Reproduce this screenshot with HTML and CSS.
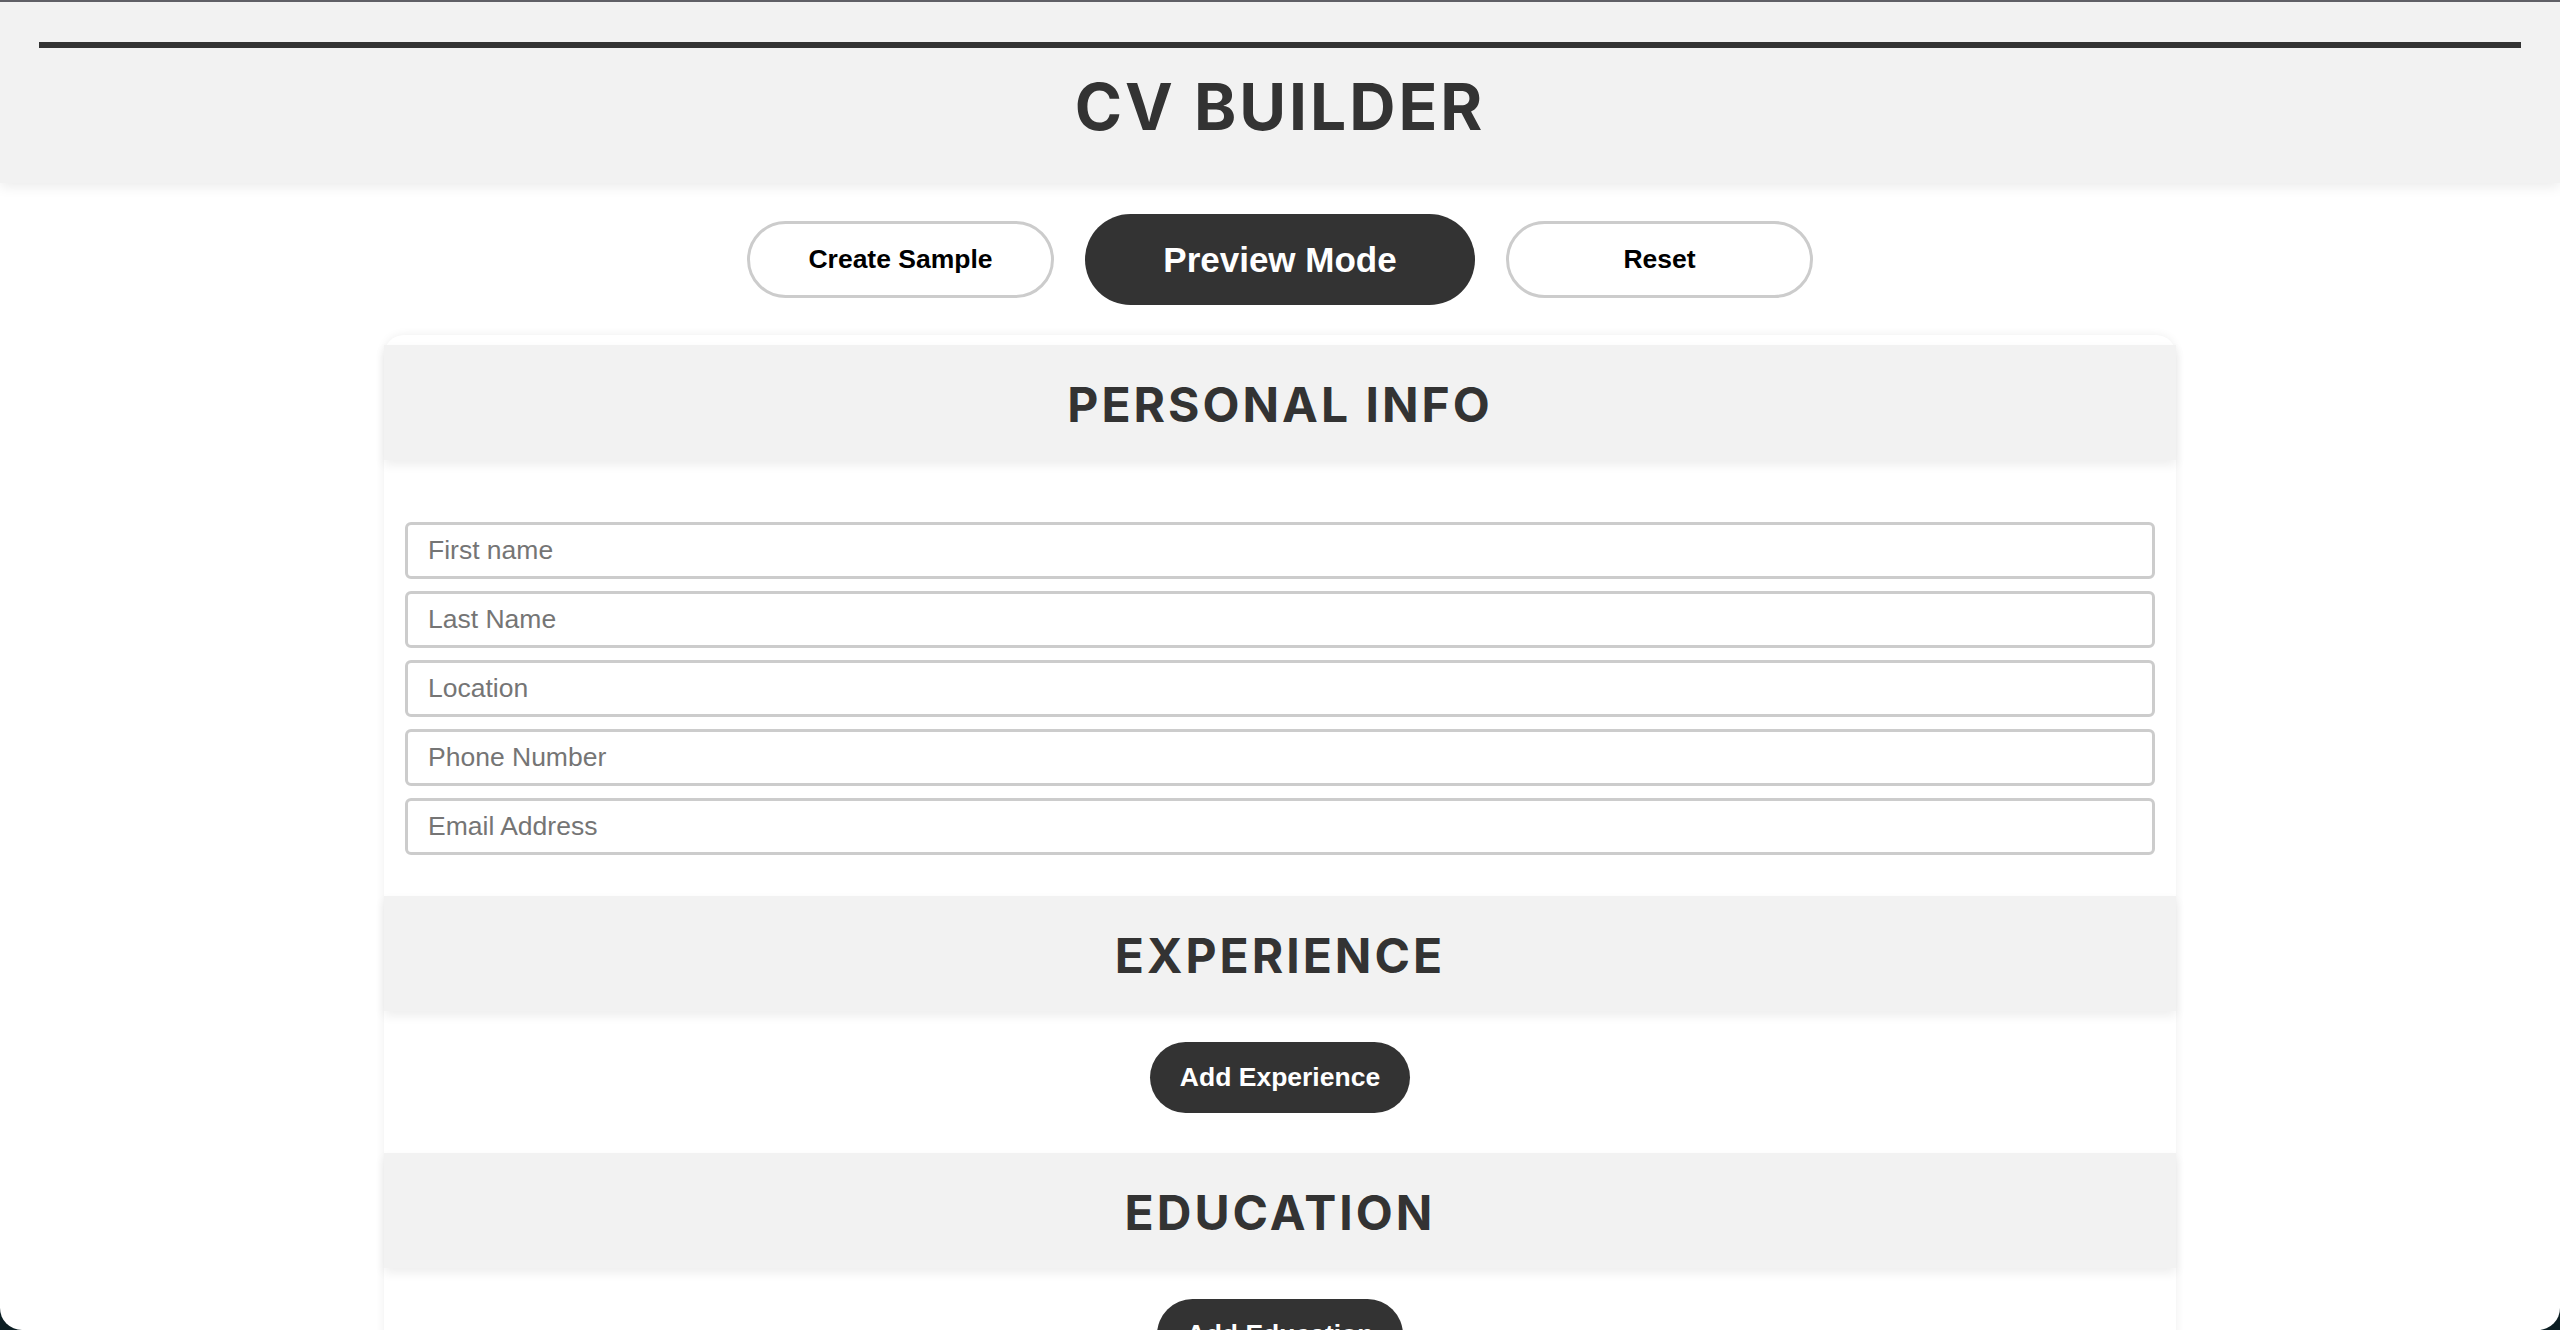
FILE: index.html
```html
<!DOCTYPE html>
<html lang="en">
<head>
<meta charset="utf-8">
<title>CV Builder</title>
<link rel="stylesheet" href="styles.css">
</head>
<body>
<div class="window">
  <header class="app-header">
    <div class="rule"></div>
    <h1 class="app-title">CV BUILDER</h1>
  </header>

  <nav class="toolbar">
    <button class="btn btn-outline">Create Sample</button>
    <button class="btn btn-main">Preview Mode</button>
    <button class="btn btn-outline">Reset</button>
  </nav>

  <main class="card">
    <section class="section">
      <div class="section-head"><h2>PERSONAL INFO</h2></div>
      <form class="fields">
        <input class="field" type="text" placeholder="First name">
        <input class="field" type="text" placeholder="Last Name">
        <input class="field" type="text" placeholder="Location">
        <input class="field" type="text" placeholder="Phone Number">
        <input class="field" type="text" placeholder="Email Address">
      </form>
    </section>

    <section class="section">
      <div class="section-head"><h2>EXPERIENCE</h2></div>
      <div class="section-actions">
        <button class="btn btn-add">Add Experience</button>
      </div>
    </section>

    <section class="section">
      <div class="section-head"><h2>EDUCATION</h2></div>
      <div class="section-actions">
        <button class="btn btn-add">Add Education</button>
      </div>
    </section>
  </main>
</div>
</body>
</html>
```

FILE: styles.css
```css
html {
  background: #0c1e23;
}

body {
  margin: 0;
}

.window {
  box-sizing: border-box;
  height: 100vh;
  overflow: hidden;
  background: #ffffff;
  border-top: 2px solid #606066;
  border-radius: 0 0 22px 22px;
  font-family: Inter, "Liberation Sans", sans-serif;
  color: #333333;
}

/* ---------- header ---------- */
.app-header {
  background: #f2f2f2;
  padding: 40px 39px 44px;
  box-shadow: 0 4px 12px rgba(0, 0, 0, 0.08);
}

.rule {
  height: 6px;
  background: #333333;
}

.app-title {
  margin: 27px 0 0;
  font-family: Inter, "Liberation Sans", sans-serif;
  font-weight: 700;
  font-size: 64px;
  line-height: 1;
  letter-spacing: 3px;
  text-align: center;
  color: #333333;
}

/* ---------- toolbar ---------- */
.toolbar {
  display: flex;
  justify-content: center;
  align-items: center;
  gap: 31px;
  margin-top: 31px;
}

.btn {
  font-family: "Liberation Sans", Arial, sans-serif;
  font-weight: 700;
  cursor: pointer;
  box-sizing: border-box;
}

.btn-outline {
  width: 307px;
  height: 77px;
  background: #ffffff;
  color: #000000;
  border: 3px solid #cccccc;
  border-radius: 40px;
  font-size: 26.5px;
}

.btn-main {
  width: 390px;
  height: 91px;
  background: #333333;
  color: #ffffff;
  border: none;
  border-radius: 46px;
  font-size: 35px;
}

/* ---------- card ---------- */
.card {
  width: 1792px;
  margin: 30px auto 0;
  padding-top: 10px;
  background: #ffffff;
  border-radius: 20px 20px 0 0;
  box-shadow: 0 0 10px rgba(0, 0, 0, 0.07);
}

.section-head {
  height: 115px;
  display: flex;
  align-items: center;
  justify-content: center;
  background: #f2f2f2;
  box-shadow: 0 5px 10px rgba(0, 0, 0, 0.07);
  position: relative;
}

.section-head h2 {
  margin: 0;
  padding-top: 3px;
  font-family: Inter, "Liberation Sans", sans-serif;
  font-weight: 700;
  font-size: 48px;
  letter-spacing: 3px;
  color: #333333;
}

.fields {
  display: flex;
  flex-direction: column;
  gap: 12px;
  padding: 62px 21px 41px;
}

.field {
  box-sizing: border-box;
  height: 57px;
  padding: 0 20px;
  border: 3px solid #cccccc;
  border-radius: 6px;
  font-family: "Liberation Sans", Arial, sans-serif;
  font-size: 26.5px;
  color: #333333;
  background: #ffffff;
}

.field::placeholder {
  color: #757575;
}

.section-actions {
  display: flex;
  justify-content: center;
  padding: 31px 0 40px;
}

.btn-add {
  height: 71px;
  padding: 0 30px;
  background: #333333;
  color: #ffffff;
  border: none;
  border-radius: 36px;
  font-size: 26.5px;
}
```
